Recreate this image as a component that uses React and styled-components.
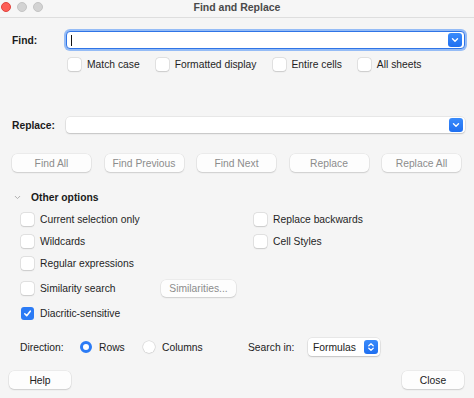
import React from "react";
import styled, { createGlobalStyle } from "styled-components";

const Global = createGlobalStyle`
  html, body { margin: 0; padding: 0; background: #f5f5f5; }
  body { font-family: "Liberation Sans", Arial, sans-serif; font-size: 10.3px; color: #222; }
  * { box-sizing: border-box; }
`;

const Window = styled.div`
  width: 474px;
  height: 398px;
  background: #f5f5f5;
  display: flex;
  flex-direction: column;
  overflow: hidden;
`;

const TitleBar = styled.div`
  height: 18px;
  flex: 0 0 18px;
  background: #f6f6f6;
  border-bottom: 1px solid #dedede;
  display: flex;
  align-items: center;
  position: relative;
  padding-left: 1px;
  padding-bottom: 3px;
`;

const Lights = styled.div`
  display: flex;
  gap: 6px;
  align-items: center;
`;

const Light = styled.span`
  width: 10px;
  height: 10px;
  border-radius: 50%;
  background: ${(p) => p.$c};
  border: 0.5px solid ${(p) => p.$b};
`;

const Title = styled.div`
  position: absolute;
  left: 0;
  right: 0;
  top: 1px;
  text-align: center;
  font-weight: bold;
  font-size: 10.5px;
  color: #4a4a4a;
  pointer-events: none;
`;

const Content = styled.div`
  display: flex;
  flex-direction: column;
  padding: 0 9px 0 12px;
`;

const Row = styled.div`
  display: flex;
  align-items: center;
  height: ${(p) => p.$h}px;
  margin-top: ${(p) => p.$mt || 0}px;
  padding-left: ${(p) => p.$pl || 0}px;
  gap: ${(p) => p.$gap || 0}px;
`;

const FieldLabel = styled.div`
  width: 54px;
  flex: 0 0 54px;
  font-weight: bold;
  color: #1a1a1a;
`;

const Combo = styled.div`
  flex: 1;
  height: ${(p) => (p.$focus ? 18 : 16)}px;
  background: #fff;
  border-radius: 4px;
  display: flex;
  align-items: center;
  justify-content: space-between;
  padding: 0 2px 0 4px;
  ${(p) =>
    p.$focus
      ? `border: 1px solid #2f74e6; box-shadow: 0 0 0 2px rgba(70,140,245,0.55);`
      : `box-shadow: 0 0 0 0.5px rgba(0,0,0,0.1), 0 1px 1.5px rgba(0,0,0,0.16);`}
`;

const Caret = styled.span`
  width: 1px;
  height: 11px;
  background: #111;
`;

const BlueBtn = styled.span`
  width: 14px;
  height: 14px;
  border-radius: 3px;
  background: linear-gradient(#3a8bfb, #1f6ff0);
  display: flex;
  align-items: center;
  justify-content: center;
  margin-left: auto;
`;

const Box = styled.span`
  width: 13px;
  height: 13px;
  flex: 0 0 13px;
  border-radius: 3px;
  background: ${(p) => (p.$checked ? "#2b7bf5" : "#fff")};
  box-shadow: ${(p) =>
    p.$checked
      ? "none"
      : "0 0 0 0.5px rgba(0,0,0,0.13), 0 0.5px 1.5px rgba(0,0,0,0.12)"};
  display: flex;
  align-items: center;
  justify-content: center;
`;

const CheckItem = styled.label`
  display: flex;
  align-items: center;
  gap: 6px;
  white-space: nowrap;
  color: #1f1f1f;
`;

const Button = styled.div`
  width: ${(p) => p.$w}px;
  height: 18px;
  background: #fdfdfd;
  border-radius: 5px;
  box-shadow: 0 0 0 0.5px rgba(0,0,0,0.08), 0 1px 1.5px rgba(0,0,0,0.13);
  display: flex;
  align-items: center;
  justify-content: center;
  color: ${(p) => (p.$disabled ? "#8c8c8c" : "#222")};
  white-space: nowrap;
`;

const ButtonRow = styled.div`
  display: flex;
  gap: 13.5px;
  height: 18px;
  margin-top: 21px;
`;

const SectionHead = styled.div`
  display: flex;
  align-items: center;
  height: 14px;
  margin-top: 18px;
  gap: 10px;
  padding-left: 2px;
  font-weight: bold;
  color: #1a1a1a;
`;

const OptionsList = styled.div`
  display: flex;
  flex-direction: column;
  margin-top: 4px;
`;

const OptionRow = styled.div`
  display: grid;
  grid-template-columns: 140px 93px 1fr;
  align-items: center;
  height: ${(p) => p.$h}px;
  padding-left: 9px;
`;

const SmallButton = styled(Button)`
  height: 17px;
`;

const DirRow = styled.div`
  display: flex;
  align-items: center;
  height: 20px;
  margin-top: 13px;
  padding-left: 8px;
`;

const Cell = styled.div`
  width: ${(p) => p.$w}px;
  flex: 0 0 ${(p) => p.$w}px;
  display: flex;
  align-items: center;
  gap: 7px;
  white-space: nowrap;
`;

const Radio = styled.span`
  width: 12px;
  height: 12px;
  border-radius: 50%;
  ${(p) =>
    p.$on
      ? `background: #fff; border: 3.5px solid #2b7bf5;`
      : `background: #fff; box-shadow: 0 0 0 0.5px rgba(0,0,0,0.13), 0 0.5px 1.5px rgba(0,0,0,0.12);`}
`;

const Select = styled.div`
  width: 72px;
  height: 18px;
  background: #fff;
  border-radius: 4px;
  box-shadow: 0 0 0 0.5px rgba(0,0,0,0.1), 0 1px 1.5px rgba(0,0,0,0.16);
  display: flex;
  align-items: center;
  padding: 0 2px 0 5px;
`;

const Footer = styled.div`
  display: flex;
  justify-content: space-between;
  padding: 0 10px 0 9px;
  margin-top: 14px;
`;

const Chevron = () => (
  <svg width="8" height="6" viewBox="0 0 8 6">
    <path d="M1.5 1.8 L4 4.2 L6.5 1.8" fill="none" stroke="#fff" strokeWidth="1.4" strokeLinecap="round" strokeLinejoin="round" />
  </svg>
);

const Stepper = () => (
  <svg width="8" height="10" viewBox="0 0 8 10">
    <path d="M1.8 3.8 L4 1.8 L6.2 3.8 M1.8 6.2 L4 8.2 L6.2 6.2" fill="none" stroke="#fff" strokeWidth="1.3" strokeLinecap="round" strokeLinejoin="round" />
  </svg>
);

const Tick = () => (
  <svg width="9" height="9" viewBox="0 0 9 9">
    <path d="M1.8 4.8 L3.7 6.7 L7.3 2.2" fill="none" stroke="#fff" strokeWidth="1.6" strokeLinecap="round" strokeLinejoin="round" />
  </svg>
);

const Disclosure = () => (
  <svg width="7" height="5" viewBox="0 0 7 5">
    <path d="M1.2 1.3 L3.5 3.6 L5.8 1.3" fill="none" stroke="#a8a8a8" strokeWidth="0.9" strokeLinecap="round" strokeLinejoin="round" />
  </svg>
);

const Check = ({ label, checked }) => (
  <CheckItem>
    <Box $checked={checked}>{checked && <Tick />}</Box>
    {label}
  </CheckItem>
);

export default function App() {
  return (
    <>
      <Global />
      <Window>
        <TitleBar>
          <Lights>
            <Light $c="#fe5f57" $b="#e0443e" />
            <Light $c="#d3d3d3" $b="#c4c4c4" />
            <Light $c="#d3d3d3" $b="#c4c4c4" />
          </Lights>
          <Title>Find and Replace</Title>
        </TitleBar>
        <Content>
          <Row $h={18} $mt={13}>
            <FieldLabel>Find:</FieldLabel>
            <Combo $focus>
              <Caret />
              <BlueBtn>
                <Chevron />
              </BlueBtn>
            </Combo>
          </Row>
          <Row $h={18} $mt={6} $pl={56} $gap={16}>
            <Check label="Match case" />
            <Check label="Formatted display" />
            <Check label="Entire cells" />
            <Check label="All sheets" />
          </Row>
          <Row $h={16} $mt={44}>
            <FieldLabel>Replace:</FieldLabel>
            <Combo>
              <BlueBtn>
                <Chevron />
              </BlueBtn>
            </Combo>
          </Row>
          <ButtonRow>
            <Button $w={79} $disabled>Find All</Button>
            <Button $w={79} $disabled>Find Previous</Button>
            <Button $w={79} $disabled>Find Next</Button>
            <Button $w={79} $disabled>Replace</Button>
            <Button $w={79} $disabled>Replace All</Button>
          </ButtonRow>
          <SectionHead>
            <Disclosure />
            Other options
          </SectionHead>
          <OptionsList>
            <OptionRow $h={22}>
              <Check label="Current selection only" />
              <span />
              <Check label="Replace backwards" />
            </OptionRow>
            <OptionRow $h={22}>
              <Check label="Wildcards" />
              <span />
              <Check label="Cell Styles" />
            </OptionRow>
            <OptionRow $h={22}>
              <Check label="Regular expressions" />
            </OptionRow>
            <OptionRow $h={28}>
              <Check label="Similarity search" />
              <SmallButton $w={75} $disabled>Similarities...</SmallButton>
            </OptionRow>
            <OptionRow $h={22}>
              <Check label="Diacritic-sensitive" checked />
            </OptionRow>
          </OptionsList>
          <DirRow>
            <Cell $w={60}>Direction:</Cell>
            <Cell $w={63}>
              <Radio $on />
              Rows
            </Cell>
            <Cell $w={105}>
              <Radio />
              Columns
            </Cell>
            <Cell $w={60}>Search in:</Cell>
            <Select>
              Formulas
              <BlueBtn>
                <Stepper />
              </BlueBtn>
            </Select>
          </DirRow>
        </Content>
        <Footer>
          <Button $w={62}>Help</Button>
          <Button $w={62}>Close</Button>
        </Footer>
      </Window>
    </>
  );
}
